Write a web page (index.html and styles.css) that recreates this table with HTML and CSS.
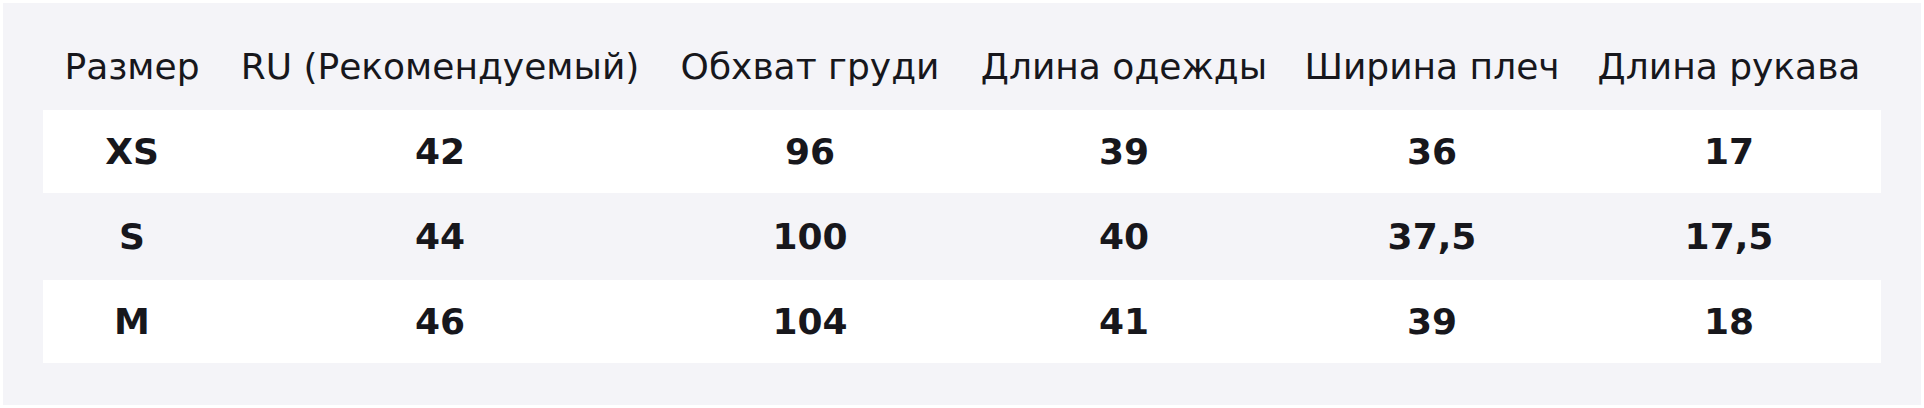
FILE: index.html
```html
<!DOCTYPE html>
<html lang="ru">
<head>
<meta charset="utf-8">
<title>Таблица размеров</title>
<link rel="stylesheet" href="styles.css">
</head>
<body>
<div class="size-panel">
  <table class="size-table">
    <colgroup>
      <col class="c-size">
      <col class="c-ru">
      <col class="c-chest">
      <col class="c-length">
      <col class="c-shoulder">
      <col class="c-sleeve">
    </colgroup>
    <thead>
      <tr>
        <th>Размер</th>
        <th>RU (Рекомендуемый)</th>
        <th>Обхват груди</th>
        <th>Длина одежды</th>
        <th>Ширина плеч</th>
        <th>Длина рукава</th>
      </tr>
    </thead>
    <tbody>
      <tr class="row-light">
        <td>XS</td><td>42</td><td>96</td><td>39</td><td>36</td><td>17</td>
      </tr>
      <tr class="row-tint">
        <td>S</td><td>44</td><td>100</td><td>40</td><td>37,5</td><td>17,5</td>
      </tr>
      <tr class="row-light">
        <td>M</td><td>46</td><td>104</td><td>41</td><td>39</td><td>18</td>
      </tr>
    </tbody>
  </table>
</div>
</body>
</html>
```

FILE: styles.css
```css
html, body {
  background: #ffffff;
}
body {
  margin: 3px;
  font-family: "DejaVu Sans", "Noto Sans", sans-serif;
  color: #17171c;
}
.size-panel {
  background: #f4f4f8;
  padding: 40px 40px 40px 40px;
  height: 402px;
  box-sizing: border-box;
}
.size-table {
  width: 1838px;
  table-layout: fixed;
  border-collapse: collapse;
}
.c-size { width: 178px; }
.c-ru { width: 438px; }
.c-chest { width: 302px; }
.c-length { width: 326px; }
.c-shoulder { width: 290px; }
.c-sleeve { width: 304px; }

.size-table th,
.size-table td {
  padding: 0;
  text-align: center;
  white-space: nowrap;
  font-size: 36px;
  border-bottom: 2px solid #f4f4f8;
}
.size-table th {
  font-weight: normal;
  line-height: 43px;
  padding-top: 2px;
  padding-bottom: 20px;
}
.size-table td {
  font-weight: bold;
  line-height: 43px;
  padding-top: 20px;
  padding-bottom: 20px;
}
.row-light td {
  background: #ffffff;
}
.row-tint td {
  background: #f4f4f8;
}
```
